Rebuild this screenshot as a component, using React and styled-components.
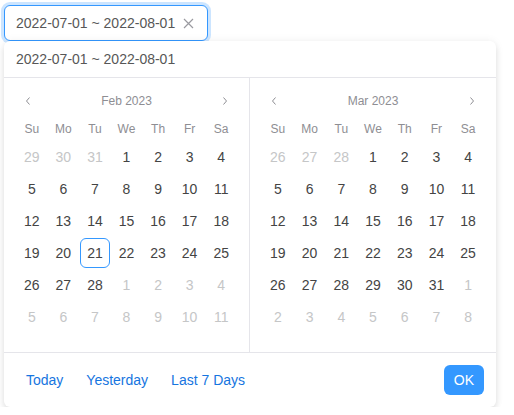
import React from 'react';
import styled, { createGlobalStyle } from 'styled-components';

const GlobalStyle = createGlobalStyle`
  body {
    margin: 0;
    background: #fff;
    font-family: "Liberation Sans", Arial, sans-serif;
    color: #575757;
  }
`;

const weekDays = ['Su', 'Mo', 'Tu', 'We', 'Th', 'Fr', 'Sa'];

// builds 6 rows of 7 days: leading days of prev month, this month, trailing days
const buildMonth = (prevLast, startDay, total) => {
  const cells = [];
  for (let i = startDay - 1; i >= 0; i--) cells.push({ n: prevLast - i, muted: true });
  for (let d = 1; d <= total; d++) cells.push({ n: d, muted: false });
  let next = 1;
  while (cells.length < 42) cells.push({ n: next++, muted: true });
  const rows = [];
  for (let r = 0; r < 6; r++) rows.push(cells.slice(r * 7, r * 7 + 7));
  return rows;
};

const months = [
  { title: 'Feb 2023', rows: buildMonth(31, 3, 28), today: 21 },
  { title: 'Mar 2023', rows: buildMonth(28, 3, 31) },
];

const Chevron = ({ dir }) => (
  <svg width="8" height="10" viewBox="0 0 8 10">
    <polyline
      points={dir === 'left' ? '5.5,1.5 2.5,5 5.5,8.5' : '2.5,1.5 5.5,5 2.5,8.5'}
      fill="none"
      stroke="#8e8e93"
      strokeWidth="1"
    />
  </svg>
);

const ClearIcon = () => (
  <svg width="11" height="11" viewBox="0 0 11 11">
    <path d="M1 1L10 10M10 1L1 10" stroke="#9a9aa0" strokeWidth="1.2" fill="none" />
  </svg>
);

const App = () => {
  return (
    <Page>
      <GlobalStyle />
      <Toggle>
        <ToggleValue>2022-07-01 ~ 2022-08-01</ToggleValue>
        <ClearButton>
          <ClearIcon />
        </ClearButton>
      </Toggle>

      <Popup>
        <RangeHeader>2022-07-01 ~ 2022-08-01</RangeHeader>

        <Calendars>
          {months.map((m, i) => (
            <Calendar key={m.title} divided={i === 0}>
              <MonthHeader>
                <NavButton>
                  <Chevron dir="left" />
                </NavButton>
                <MonthTitle>{m.title}</MonthTitle>
                <NavButton>
                  <Chevron dir="right" />
                </NavButton>
              </MonthHeader>
              <WeekRow>
                {weekDays.map((w) => (
                  <WeekCell key={w}>{w}</WeekCell>
                ))}
              </WeekRow>
              {m.rows.map((row, r) => (
                <DayRow key={r}>
                  {row.map((c, k) => (
                    <DayCell key={k}>
                      <DayContent
                        muted={c.muted}
                        today={!c.muted && c.n === m.today}
                      >
                        {c.n}
                      </DayContent>
                    </DayCell>
                  ))}
                </DayRow>
              ))}
            </Calendar>
          ))}
        </Calendars>

        <Footer>
          <Ranges>
            <RangeLink>Today</RangeLink>
            <RangeLink>Yesterday</RangeLink>
            <RangeLink>Last 7 Days</RangeLink>
          </Ranges>
          <OkButton>OK</OkButton>
        </Footer>
      </Popup>
    </Page>
  );
};

export default App;

/* styles */
const Page = styled.div`
  padding: 5px 0 0 4px;
`;

const Toggle = styled.div`
  box-sizing: border-box;
  width: 204px;
  height: 36px;
  display: flex;
  align-items: center;
  justify-content: space-between;
  padding: 0 13px 0 11px;
  border: 1px solid #3498ff;
  border-radius: 6px;
  box-shadow: 0 0 0 3px rgba(52, 152, 255, 0.25);
  background: #fff;
`;

const ToggleValue = styled.span`
  font-size: 14px;
  color: #575757;
`;

const ClearButton = styled.span`
  display: flex;
  align-items: center;
`;

const Popup = styled.div`
  width: 492px;
  background: #fff;
  border-radius: 6px;
  box-shadow: 0 4px 6px rgba(0, 0, 0, 0.1), 0 0 10px rgba(0, 0, 0, 0.06);
`;

const RangeHeader = styled.div`
  height: 36px;
  line-height: 36px;
  padding: 0 12px;
  font-size: 14px;
  color: #575757;
  border-bottom: 1px solid #e5e5ea;
`;

const Calendars = styled.div`
  display: flex;
  height: 274px;
`;

const Calendar = styled.div`
  box-sizing: border-box;
  width: 246px;
  padding: 7px 12px 0;
  border-right: ${(p) => (p.divided ? '1px solid #e5e5ea' : 'none')};
`;

const MonthHeader = styled.div`
  height: 32px;
  display: flex;
  align-items: center;
  justify-content: space-between;
  padding: 0 8px;
`;

const NavButton = styled.span`
  display: flex;
  align-items: center;
`;

const MonthTitle = styled.span`
  font-size: 12px;
  color: #8e8e93;
`;

const WeekRow = styled.div`
  display: grid;
  grid-template-columns: repeat(7, 1fr);
  height: 24px;
  align-items: center;
`;

const WeekCell = styled.span`
  text-align: center;
  font-size: 12px;
  color: #8e8e93;
`;

const DayRow = styled.div`
  display: grid;
  grid-template-columns: repeat(7, 1fr);
  height: 32px;
  align-items: center;
`;

const DayCell = styled.div`
  display: flex;
  justify-content: center;
`;

const DayContent = styled.span`
  box-sizing: border-box;
  width: 30px;
  height: 30px;
  display: flex;
  align-items: center;
  justify-content: center;
  font-size: 14px;
  border-radius: 6px;
  color: ${(p) => (p.muted ? '#c5c6c7' : '#444')};
  border: 1px solid ${(p) => (p.today ? '#3498ff' : 'transparent')};
`;

const Footer = styled.div`
  height: 54px;
  display: flex;
  align-items: center;
  justify-content: space-between;
  padding: 0 12px 0 22px;
  border-top: 1px solid #e5e5ea;
`;

const Ranges = styled.div`
  display: flex;
  gap: 23px;
`;

const RangeLink = styled.span`
  font-size: 14px;
  color: #1675e0;
`;

const OkButton = styled.button`
  height: 30px;
  padding: 0 10px;
  border: none;
  border-radius: 6px;
  background: #3498ff;
  color: #fff;
  font-family: inherit;
  font-size: 14px;
`;
